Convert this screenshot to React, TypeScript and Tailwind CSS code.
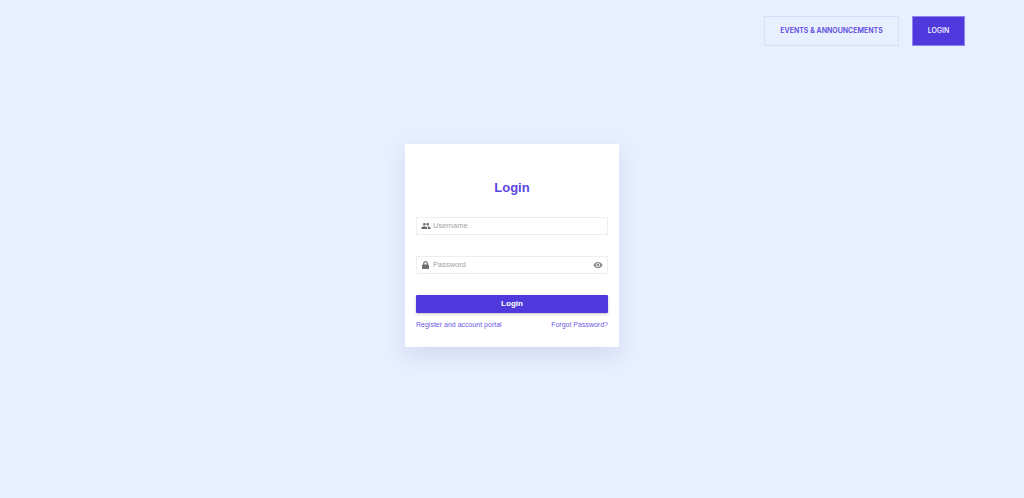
import React from 'react';
import { FaLock } from 'react-icons/fa';
import { MdPeople, MdVisibility } from 'react-icons/md';

const App: React.FC = () => {
  return (
    <div className="h-[498px] w-full overflow-hidden bg-[#e8efff] font-['Liberation_Sans',sans-serif]">
      <header className="flex justify-end gap-[13px] pt-4 pr-[59px]">
        <button className="h-[30px] w-[135px] border-[1.5px] border-[#d8defc] font-['Inter',sans-serif] text-[7px] font-semibold text-[#5a46e0]">
          EVENTS &amp; ANNOUNCEMENTS
        </button>
        <button className="h-[30px] w-[53px] border border-[#8e85ee] bg-[#4f39dd] font-['Inter',sans-serif] text-[7px] font-medium text-white">
          LOGIN
        </button>
      </header>

      <main className="flex justify-center pt-[98px]">
        <div className="flex h-[203px] w-[214px] flex-col bg-white px-[11px] shadow-[0_8px_20px_rgba(60,70,130,0.13)]">
          <h1 className="mt-[35px] text-center text-[13px] leading-[18px] font-bold text-[#5a46e0]">Login</h1>

          <div className="mt-[20px] flex h-[18px] items-center border border-[#eeeeee] pl-[4px] text-[7.5px] text-[#a3a3a3]">
            <MdPeople className="h-[10px] w-[10px] text-[#666666]" />
            <span className="ml-[2px]">Username</span>
          </div>

          <div className="mt-[21px] flex h-[18px] items-center border border-[#eeeeee] pr-[4px] pl-[5px] text-[7.5px] text-[#a3a3a3]">
            <FaLock className="h-[8px] w-[7px] text-[#707070]" />
            <span className="ml-[4px]">Password</span>
            <MdVisibility className="ml-auto h-[10px] w-[10px] text-[#8a8a8a]" />
          </div>

          <button className="mt-[21px] h-[18px] rounded-[1px] bg-[#4f39dd] text-[8px] font-bold text-white shadow-[0_1px_3px_rgba(0,0,0,0.25)]">
            Login
          </button>

          <div className="mt-[7px] flex justify-between text-[7px] leading-[10px] text-[#6a58e4]">
            <a>Register and account portal</a>
            <a>Forgot Password?</a>
          </div>
        </div>
      </main>
    </div>
  );
};

export default App;
